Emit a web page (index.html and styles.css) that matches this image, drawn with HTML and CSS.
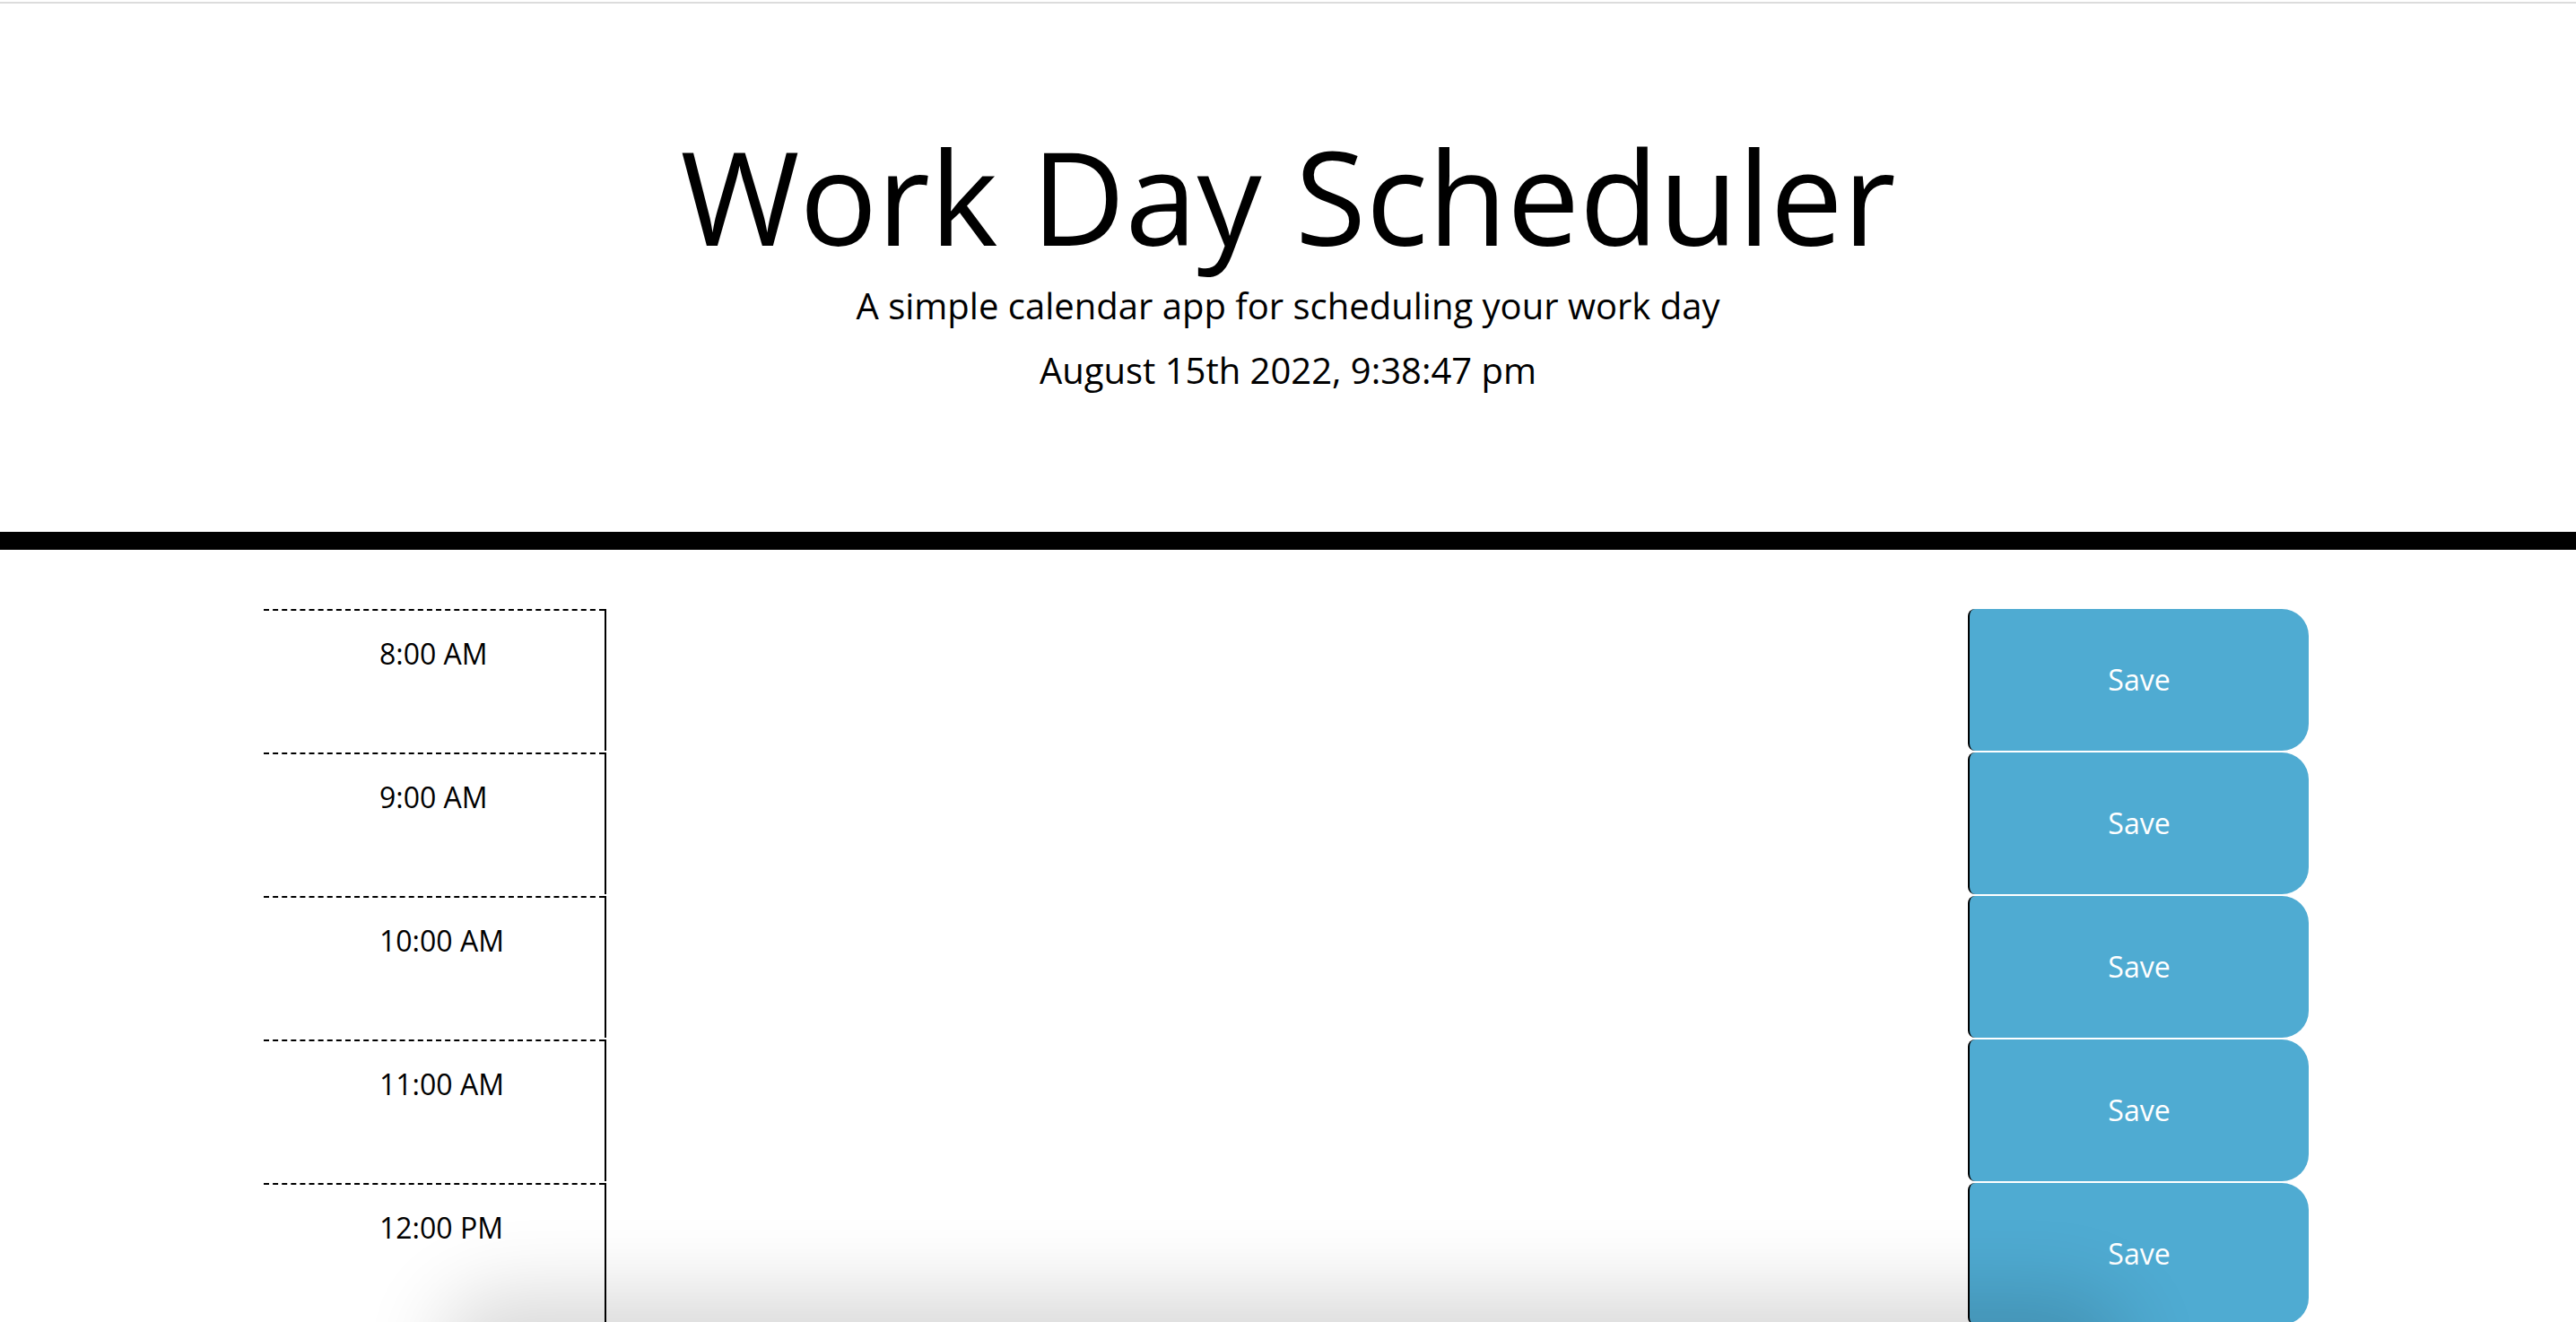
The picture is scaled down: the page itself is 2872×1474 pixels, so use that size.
FILE: index.html
```html
<!DOCTYPE html>
<html lang="en">
<head>
  <meta charset="UTF-8">
  <title>Work Day Scheduler</title>
  <link rel="stylesheet" href="styles.css">
</head>
<body>
  <div class="topline"></div>
  <header class="jumbotron">
    <h1 class="title">Work Day Scheduler</h1>
    <p class="lead">A simple calendar app for scheduling your work day</p>
    <p class="lead" id="currentDay">August 15th 2022, 9:38:47 pm</p>
  </header>

  <main class="container">
    <div class="time-block" id="hour-8">
      <div class="hour">8:00 AM</div>
      <textarea class="description"></textarea>
      <button class="saveBtn">Save</button>
    </div>
    <div class="time-block" id="hour-9">
      <div class="hour">9:00 AM</div>
      <textarea class="description"></textarea>
      <button class="saveBtn">Save</button>
    </div>
    <div class="time-block" id="hour-10">
      <div class="hour">10:00 AM</div>
      <textarea class="description"></textarea>
      <button class="saveBtn">Save</button>
    </div>
    <div class="time-block" id="hour-11">
      <div class="hour">11:00 AM</div>
      <textarea class="description"></textarea>
      <button class="saveBtn">Save</button>
    </div>
    <div class="time-block" id="hour-12">
      <div class="hour">12:00 PM</div>
      <textarea class="description"></textarea>
      <button class="saveBtn">Save</button>
    </div>
    <div class="time-block" id="hour-13">
      <div class="hour">1:00 PM</div>
      <textarea class="description"></textarea>
      <button class="saveBtn">Save</button>
    </div>
    <div class="time-block" id="hour-14">
      <div class="hour">2:00 PM</div>
      <textarea class="description"></textarea>
      <button class="saveBtn">Save</button>
    </div>
    <div class="time-block" id="hour-15">
      <div class="hour">3:00 PM</div>
      <textarea class="description"></textarea>
      <button class="saveBtn">Save</button>
    </div>
    <div class="time-block" id="hour-16">
      <div class="hour">4:00 PM</div>
      <textarea class="description"></textarea>
      <button class="saveBtn">Save</button>
    </div>
    <div class="time-block" id="hour-17">
      <div class="hour">5:00 PM</div>
      <textarea class="description"></textarea>
      <button class="saveBtn">Save</button>
    </div>
  </main>

  <div class="dock-shade"></div>
</body>
</html>
```

FILE: styles.css
```css
* {
  box-sizing: border-box;
}

html {
  scrollbar-width: none;
}

html::-webkit-scrollbar {
  display: none;
}

body {
  margin: 0;
  font-family: "Open Sans", "Liberation Sans", sans-serif;
  font-size: 32px;
  line-height: 1;
  color: #000;
  background: #fff;
}

.topline {
  margin-top: 2px;
  height: 2px;
  background: #dcdcdc;
}

/* header */
.jumbotron {
  padding: 128px 64px;
  margin-bottom: 64px;
  text-align: center;
  border-bottom: 20px solid #000;
}

.title {
  margin: 0 0 16px;
  font-size: 144px;
  font-weight: 400;
  line-height: 1.2;
}

.lead {
  margin: 0 0 32px;
  font-size: 40px;
  font-weight: 400;
  line-height: 1;
}

/* hour rows */
.container {
  width: 2280px;
  margin-left: calc(50% - 1142px);
}

.time-block {
  display: grid;
  grid-template-columns: 2fr 8fr 2fr;
  height: 160px;
  border-top: 2px solid #fff;
}

.hour {
  border-top: 2px dashed #000;
  padding-top: 32px;
  padding-left: 129px;
  text-align: left;
  line-height: 32px;
  white-space: nowrap;
}

.description {
  margin: 0;
  padding: 20px;
  border: none;
  border-left: 2px solid #000;
  background: transparent;
  resize: none;
  font: inherit;
  color: #000;
}

.saveBtn {
  margin: 0;
  padding: 0;
  border: none;
  border-left: 2px solid #000;
  border-radius: 8px 30px 30px 8px;
  background-color: #4fabd2;
  color: #fff;
  font-family: inherit;
  font-size: 32px;
  line-height: 1;
}

/* soft shade cast along the bottom edge of the window */
.dock-shade {
  position: fixed;
  left: 520px;
  width: 1820px;
  bottom: -70px;
  height: 70px;
  border-radius: 40px;
  box-shadow: 0 0 90px 30px rgba(0, 0, 0, 0.16);
  pointer-events: none;
}
```
